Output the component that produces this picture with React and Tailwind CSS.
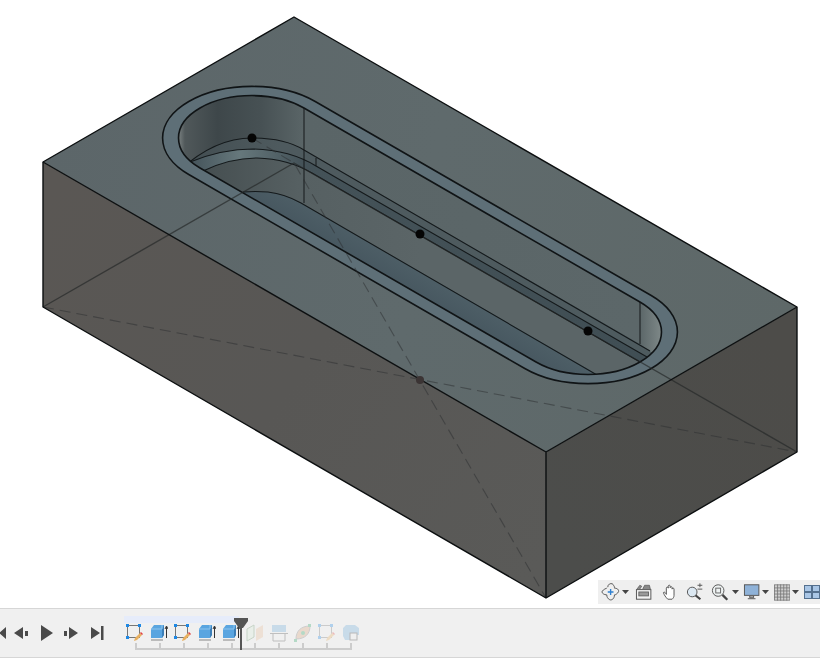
import React from 'react';

const ux = 0.866;
const uy = 0.5;

// slot outline on the iso plane: arc centres shifted down by depth
const stadium = (r, d = 0) => {
  const [ax, ay, bx, by] = [252, 138 + d, 588, 332 + d];
  const [ox, oy] = [ux * r, uy * r];
  const rx = 1.2247 * r;
  const ry = 0.7071 * r;
  return `M${ax + ox} ${ay - oy} L${bx + ox} ${by - oy} A${rx} ${ry} 0 1 1 ${bx - ox} ${by + oy} L${ax - ox} ${ay + oy} A${rx} ${ry} 0 1 1 ${ax + ox} ${ay - oy} Z`;
};

const Model = () => (
  <svg width="820" height="608" viewBox="0 0 820 608" className="block absolute left-0 top-0">
    <defs>
      <linearGradient id="topFace" gradientUnits="userSpaceOnUse" x1="43" y1="162" x2="797" y2="307">
        <stop offset="0" stopColor="#5c6669" />
        <stop offset="0.5" stopColor="#5f6a6c" />
        <stop offset="1" stopColor="#5e6868" />
      </linearGradient>
      <linearGradient id="leftFace" gradientUnits="userSpaceOnUse" x1="43" y1="200" x2="546" y2="560">
        <stop offset="0" stopColor="#5a5754" />
        <stop offset="0.5" stopColor="#585755" />
        <stop offset="1" stopColor="#5a5a58" />
      </linearGradient>
      <linearGradient id="rightFace" gradientUnits="userSpaceOnUse" x1="546" y1="520" x2="797" y2="380">
        <stop offset="0" stopColor="#4c4d4b" />
        <stop offset="1" stopColor="#4d4c49" />
      </linearGradient>
      <linearGradient id="wall" gradientUnits="userSpaceOnUse" x1="178" y1="0" x2="670" y2="0">
        <stop offset="0" stopColor="#7d8484" />
        <stop offset="0.014" stopColor="#50585a" />
        <stop offset="0.08" stopColor="#3e474a" />
        <stop offset="0.17" stopColor="#475154" />
        <stop offset="0.255" stopColor="#5a6567" />
        <stop offset="0.94" stopColor="#5c6769" />
        <stop offset="0.98" stopColor="#7c8686" />
        <stop offset="1" stopColor="#8e9696" />
      </linearGradient>
      <linearGradient id="step" gradientUnits="userSpaceOnUse" x1="190" y1="0" x2="640" y2="0">
        <stop offset="0" stopColor="#434e52" />
        <stop offset="0.2" stopColor="#4e5a5e" />
        <stop offset="1" stopColor="#4e5b5f" />
      </linearGradient>
      <linearGradient id="band" gradientUnits="userSpaceOnUse" x1="190" y1="0" x2="640" y2="0">
        <stop offset="0" stopColor="#44535a" />
        <stop offset="0.11" stopColor="#66787c" />
        <stop offset="0.25" stopColor="#445258" />
        <stop offset="1" stopColor="#404e54" />
      </linearGradient>
      <linearGradient id="floor" gradientUnits="userSpaceOnUse" x1="200" y1="0" x2="420" y2="0">
        <stop offset="0" stopColor="#454e50" />
        <stop offset="0.45" stopColor="#566062" />
        <stop offset="1" stopColor="#5b6567" />
      </linearGradient>
      <linearGradient id="slope" gradientUnits="userSpaceOnUse" x1="340" y1="225" x2="310" y2="276">
        <stop offset="0" stopColor="#4d5e66" />
        <stop offset="0.5" stopColor="#45555e" />
        <stop offset="1" stopColor="#4c5c65" />
      </linearGradient>
      <clipPath id="slotClip">
        <path d={stadium(60)} />
      </clipPath>
    </defs>

    {/* outer faces */}
    <polygon points="43,162 546,452 546,598 43,307" fill="url(#leftFace)" />
    <polygon points="546,452 797,307 797,452 546,598" fill="url(#rightFace)" />
    <polygon points="294,17 797,307 546,452 43,162" fill="url(#topFace)" />

    {/* ring and pocket */}
    <path d={stadium(73)} fill="#5e6f77" stroke="#101416" strokeWidth="1.6" />
    <g clipPath="url(#slotClip)">
      <rect x="170" y="80" width="520" height="310" fill="url(#wall)" />
      <path d="M180 170 Q215 138 252 138 Q285 138 304 150 L640 344 L690 380 L690 400 L170 400 Z" fill="url(#step)" />
      <path d="M190 162 Q222 149 253 149 Q290 150 316 166 L640 353 L690 390 L690 400 L170 400 Z" fill="url(#band)" />
      <path d="M203 171 Q230 158 257 158 Q288 159 312 173 L640 362 L690 400 L170 400 Z" fill="url(#floor)" />
      <path d="M243 192 Q255 191 268 192 Q285 194 301 203 L640 399 L170 400 L170 200 Z" fill="url(#slope)" />
      <g fill="none" stroke="#14191b" strokeWidth="1.1">
        <path d="M180 170 Q215 138 252 138 Q285 138 304 150 L650 351" />
        <path d="M190 162 Q222 149 253 149 Q290 150 316 166 L647 357" />
        <path d="M203 171 Q230 158 257 158 Q288 159 312 173 L640 362" />
        <path d="M243 192 Q255 191 268 192 Q285 194 301 203 L597 375" />
      </g>
      <path d="M304 108 V203 M640 301 V344 M316 158 V166" stroke="#14191b" strokeWidth="1" />
    </g>
    <path d={stadium(60)} fill="none" stroke="#101416" strokeWidth="1.6" />

    {/* hidden edges seen through the body */}
    <g fill="none" stroke="#232627" strokeOpacity="0.65" strokeWidth="1.4">
      <path d="M43 307 L294 163 L797 452" />
    </g>
    <g fill="none" stroke="#2c2e2f" strokeOpacity="0.5" strokeWidth="1.1" strokeDasharray="11 6">
      <path d="M43 307 L797 452" />
      <path d="M252 138 L294 163 L546 598" />
    </g>

    {/* silhouette */}
    <g fill="none" stroke="#0c0f10" strokeWidth="1.4" strokeLinejoin="round">
      <polygon points="294,17 797,307 797,452 546,598 43,307 43,162" />
      <path d="M43 162 L546 452 L797 307 M546 452 V598" />
    </g>

    <circle cx="252" cy="138" r="4.500" fill="#050505" />
    <circle cx="420" cy="234" r="4.500" fill="#050505" />
    <circle cx="588" cy="331" r="4.500" fill="#050505" />
    <circle cx="420" cy="380" r="4" fill="#3b3434" />
  </svg>
);

const Caret = () => (
  <svg width="7" height="4" viewBox="0 0 7 4" className="shrink-0"><path d="M0 0h7L3.5 4z" fill="#444" /></svg>
);

const NavBar = () => (
  <div className="absolute left-[598px] top-[580px] w-[222px] h-[24px] bg-[#efefef] flex items-center pl-[3px]">
    <svg width="20" height="20" viewBox="0 0 20 20" fill="none" stroke="#555" strokeWidth="1">
      <path d="M7 5c0-4 5-5 6-2 1 1 1 2 1 3 4 0 5 3 4 4-1 2-3 3-4 3 0 4-3 6-5 5-2-1-3-3-3-5-3 0-5-2-5-3s2-3 5-4" />
      <path d="M10 7v6M7 10h6" stroke="#2f80d0" strokeWidth="1.400" />
    </svg>
    <span className="ml-[2px]"><Caret /></span>
    <svg width="18" height="18" viewBox="0 0 18 18" fill="none" stroke="#555" className="ml-[6px]">
      <rect x="1.500" y="6.500" width="15" height="10" fill="#f2f2f2" />
      <rect x="4" y="9" width="10" height="4" fill="#9a9a9a" stroke="#666" />
      <path d="M2 6l3-4 2 1-2 3M8 6l2-4h5l1 4" fill="#8a8a8a" strokeWidth="0.7" />
    </svg>
    <svg width="18" height="18" viewBox="0 0 18 18" fill="#fff" stroke="#555" className="ml-[9px]">
      <path d="M6 16.500C4 14.500 2 12 1.500 9.500c1-1 2 0 3 2V5c0-1.500 2-1.500 2 0V3c0-1.500 2-1.500 2 0v1.500c0-1.500 2-1.500 2 0V6c0-1.500 2-1.500 2 0v6.500c0 2-1 3-2 4z" />
    </svg>
    <svg width="20" height="20" viewBox="0 0 20 20" fill="none" className="ml-[6px]">
      <circle cx="7.500" cy="10" r="5" fill="#dce8f2" stroke="#555" />
      <path d="M11 13.500l5 4" stroke="#444" strokeWidth="2.200" />
      <path d="M13 3h5M15.500 1v4M13 7h5" stroke="#555" />
    </svg>
    <svg width="20" height="20" viewBox="0 0 20 20" fill="none" className="ml-[6px]">
      <circle cx="8.500" cy="8.500" r="6" fill="#eef2f2" stroke="#555" />
      <rect x="6" y="6" width="5" height="5" stroke="#666" />
      <path d="M13 13l5 5" stroke="#444" strokeWidth="2.400" />
    </svg>
    <span className="ml-[3px]"><Caret /></span>
    <svg width="18" height="18" viewBox="0 0 18 18" className="ml-[4px]">
      <rect x="1.500" y="1.500" width="15" height="11" fill="#8fb2d8" stroke="#555" />
      <path d="M7 13h4v2H7zM5 16h8" stroke="#555" fill="#ccc" />
    </svg>
    <span className="ml-[1px]"><Caret /></span>
    <svg width="17" height="17" viewBox="0 0 16 16" className="ml-[5px]" fill="#cfcfcf" stroke="#777" strokeWidth="0.8">
      <rect x="0.500" y="0.500" width="15" height="15" />
      <path d="M3.500 0v16M6.500 0v16M9.500 0v16M12.500 0v16M0 3.500h16M0 6.500h16M0 9.500h16M0 12.500h16" />
    </svg>
    <span className="ml-[2px]"><Caret /></span>
    <svg width="16" height="16" viewBox="0 0 16 16" className="ml-[5px] shrink-0" fill="#a9c6e6" stroke="#54708f">
      <rect x="0.500" y="1.500" width="7" height="6" />
      <rect x="8.500" y="1.500" width="7" height="6" />
      <rect x="0.500" y="8.500" width="7" height="6" />
      <rect x="8.500" y="8.500" width="7" height="6" />
    </svg>
  </div>
);

const PlayBtn = ({ d, className }) => (
  <svg width="16" height="16" viewBox="0 0 16 16" className={className}><path d={d} fill="#4a4a4a" /></svg>
);

const SketchIcon = ({ faded }) => (
  <svg width="18" height="18" viewBox="0 0 18 18" fill="none" className={faded ? 'opacity-30 shrink-0' : 'shrink-0'}>
    <rect x="1.500" y="1.500" width="12" height="12" stroke="#777" />
    <path d="M0 0h3v3H0zM12 0h3v3h-3zM0 12h3v3H0z" fill="#1e88e5" />
    <path d="M8 17l1-3 5-5 2 2-5 5z" fill="#e8b060" />
    <path d="M14 9l1-1 2 2-1 1z" fill="#e04040" />
  </svg>
);

const ExtrudeIcon = () => (
  <svg width="18" height="18" viewBox="0 0 18 18" className="shrink-0">
    <path d="M1 5l3-4h10v10l-2 3H1z" fill="#5aa5e0" />
    <path d="M12 5l2-4v10l-2 3z" fill="#3c7fb8" />
    <path d="M1 5h11V1" fill="none" stroke="#8cc4ee" />
    <rect x="1" y="15" width="12" height="2" fill="#bbb" />
    <path d="M16.500 14V3M15 5l1.500-3L18 5" stroke="#333" fill="none" />
  </svg>
);

const FadedIcons = () => (
  <>
    <svg width="18" height="18" viewBox="0 0 18 18" className="shrink-0 opacity-40">
      <path d="M1 5l7-4v12l-7 4z" fill="#dfeee0" stroke="#8aaa8a" />
      <path d="M10 5l7-4v12l-7 4z" fill="#eac9ad" />
    </svg>
    <svg width="18" height="18" viewBox="0 0 18 18" className="shrink-0 opacity-40">
      <rect x="2" y="1" width="14" height="7" fill="#8fbde0" />
      <path d="M0 9.500h18M3 10v7h12v-7" stroke="#777" fill="none" />
    </svg>
    <svg width="18" height="18" viewBox="0 0 18 18" className="shrink-0 opacity-40">
      <path d="M2 15C2 7 7 2 16 2 16 10 11 15 2 15z" fill="#e0b89a" stroke="#999" />
      <circle cx="9" cy="9" r="2" fill="#5cb88a" />
      <path d="M0 15h3v3H0zM14 0h3v3h-3z" fill="#5cb88a" />
    </svg>
    <SketchIcon faded />
    <svg width="18" height="18" viewBox="0 0 18 18" className="shrink-0 opacity-40">
      <path d="M1 4l3-3h9l4 3v7h-5v5H3L1 12z" fill="#8fbde0" />
      <rect x="8" y="9" width="7" height="7" fill="#eee" stroke="#666" />
    </svg>
  </>
);

const Timeline = () => (
  <div className="h-[50px] bg-[#f0f0f0] border-y border-[#d6d6d6] flex items-start overflow-hidden">
    <div className="flex items-center ml-[-6px] mt-[16px] w-[126px] shrink-0">
      <PlayBtn d="M0 2h3v12H0zM5 8l7-6v12z" className="shrink-0" />
      <PlayBtn d="M1 8l9-6v12zM12 6h3v5h-3z" className="shrink-0 ml-[3px]" />
      <PlayBtn d="M2 0l12 8-12 8z" className="shrink-0 ml-[10px]" />
      <PlayBtn d="M1 6h3v5H1zM6 2l9 6-9 6z" className="shrink-0 ml-[8px]" />
      <PlayBtn d="M2 2l9 6-9 6zM12 1h2.500v14H12z" className="shrink-0 ml-[10px]" />
    </div>
    <div className="relative w-[240px] h-full shrink-0">
      <div className="absolute left-[4px] top-[7px] w-[115px] h-[7px] bg-[#e6ecfa]" />
      <div className="absolute left-[15px] top-[39px] w-[217px] h-[2px] bg-[#cccccc]" />
      <div className="absolute left-[15px] top-[34px] w-[217px] flex justify-between">
        {[0, 1, 2, 3, 4, 5, 6, 7, 8, 9].map((i) => (
          <div key={i} className="w-[2px] h-[6px] bg-[#cccccc]" />
        ))}
      </div>
      <div className="relative flex gap-[6px] pl-[6px] pt-[15px]">
        <SketchIcon />
        <ExtrudeIcon />
        <SketchIcon />
        <ExtrudeIcon />
        <ExtrudeIcon />
        <FadedIcons />
      </div>
      <div className="absolute left-[114px] top-[9px] flex flex-col items-center">
        <svg width="14" height="10" viewBox="0 0 14 10"><path d="M0 0h14v3l-5 7H5L0 3z" fill="#555" /></svg>
        <div className="w-[2px] h-[22px] bg-[#555]" />
      </div>
    </div>
  </div>
);

export default function App() {
  return (
    <div className="relative w-[820px] h-[659px] bg-white overflow-hidden font-['Liberation_Sans',sans-serif]">
      <div className="h-[608px]" />
      <Model />
      <NavBar />
      <Timeline />
    </div>
  );
}
